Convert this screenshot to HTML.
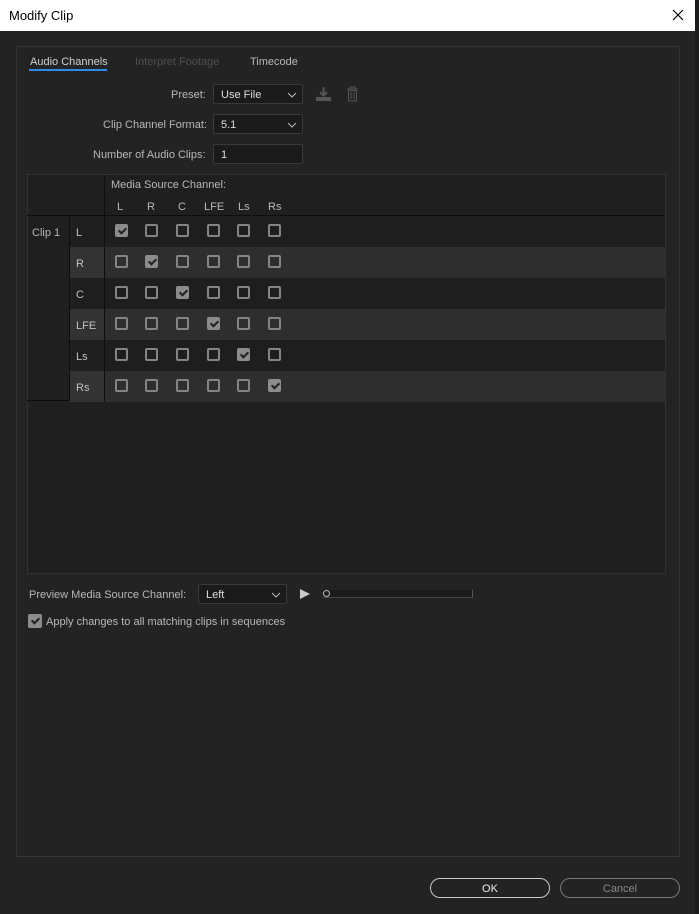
<!DOCTYPE html>
<html><head><style>
*{margin:0;padding:0;box-sizing:border-box}
body{width:699px;height:914px;background:#1a1a1a;font-family:"Liberation Sans",sans-serif;position:relative;overflow:hidden;color:#b8b8b8;font-size:11px;line-height:13px}
.dlg{position:absolute;left:0;top:0;width:695px;height:914px;background:#232323}
.title{position:absolute;left:0;top:0;width:695px;height:31px;background:#fff;color:#000;font-size:13px;line-height:15px;padding:8px 0 0 9px}
.x{position:absolute;left:672px;top:9px}
.panel{position:absolute;left:16px;top:46px;width:664px;height:811px;border:1px solid #343434}
.abs{position:absolute;white-space:nowrap}
.sel{position:absolute;height:20px;background:#1a1a1a;border:1px solid #3a3a3a;border-radius:2px;color:#ddd;padding:4px 0 0 7px}
.sel svg{position:absolute;right:5px;top:7px}
.tbl{position:absolute;left:27px;top:174px;width:639px;height:400px;background:#1f1f1f;border:1px solid #333}
.cb{position:absolute;width:13px;height:13px;border:2px solid #848484;border-radius:2px}
.cb.on{background:#8c8c8c;border-color:#8c8c8c}
.cb.on::after{content:"";position:absolute;left:3px;top:0px;width:3px;height:6px;border:solid #222;border-width:0 2px 2px 0;transform:rotate(45deg)}
.btn{position:absolute;top:878px;width:120px;height:20px;border:1px solid #aaa;border-radius:10px;text-align:center;padding-top:4px;font-size:11px}
</style></head><body>
<div class="dlg">
<div class="title">Modify Clip<svg class="x" width="12" height="12"><path d="M1 1l10 10M11 1L1 11" stroke="#000" stroke-width="1.2"/></svg></div>
<div class="panel"></div>
<div class="abs" style="left:30px;top:56px;color:#d0d0d0">Audio Channels</div>
<div class="abs" style="left:29px;top:69px;width:78px;height:2px;background:#2d8ceb"></div>
<div class="abs" style="left:135px;top:56px;color:#4e4e4e">Interpret Footage</div>
<div class="abs" style="left:250px;top:56px;color:#b8b8b8">Timecode</div>
<div class="abs" style="left:171px;top:89px">Preset:</div>
<div class="sel" style="left:213px;top:84px;width:90px">Use File<svg width="10" height="6"><path d="M1 1l4 4 4-4" stroke="#bbb" fill="none"/></svg></div>
<svg class="abs" style="left:315px;top:86px" width="17" height="16"><path d="M8.5 1v8M5 6l3.5 3.5L12 6" stroke="#555" stroke-width="2" fill="none"/><rect x="1" y="11" width="15" height="4" fill="#555"/></svg>
<svg class="abs" style="left:346px;top:86px" width="13" height="16"><path d="M1 3h11M4 3V1h5v2M2.5 4.5h8V15h-8z M5 6v7M8 6v7" stroke="#555" fill="none"/></svg>
<div class="abs" style="left:103px;top:119px">Clip Channel Format:</div>
<div class="sel" style="left:213px;top:114px;width:90px">5.1<svg width="10" height="6"><path d="M1 1l4 4 4-4" stroke="#bbb" fill="none"/></svg></div>
<div class="abs" style="left:93px;top:149px">Number of Audio Clips:</div>
<div class="sel" style="left:213px;top:144px;width:90px">1</div>
<div class="tbl"></div>
<div class="abs" style="left:104px;top:175px;width:1px;height:225px;background:#0e0e0e"></div>
<div class="abs" style="left:27px;top:215px;width:638px;height:1px;background:#0e0e0e"></div>
<div class="abs" style="left:69px;top:216px;width:1px;height:184px;background:#0e0e0e"></div>
<div class="abs" style="left:27px;top:400px;width:638px;height:1px;background:#0e0e0e"></div>
<div class="abs" style="left:111px;top:179px">Media Source Channel:</div>
<div class="abs" style="left:117px;top:201px">L</div>
<div class="abs" style="left:147px;top:201px">R</div>
<div class="abs" style="left:178px;top:201px">C</div>
<div class="abs" style="left:204px;top:201px">LFE</div>
<div class="abs" style="left:238px;top:201px">Ls</div>
<div class="abs" style="left:268px;top:201px">Rs</div>
<div class="abs" style="left:32px;top:227px">Clip 1</div>
<div id="rows"></div>
<div class="abs" style="left:29px;top:589px">Preview Media Source Channel:</div>
<div class="sel" style="left:198px;top:584px;width:89px">Left<svg width="10" height="6"><path d="M1 1l4 4 4-4" stroke="#bbb" fill="none"/></svg></div>
<svg class="abs" style="left:299px;top:588px" width="12" height="12"><path d="M1 1l10 5-10 5z" fill="#ccc"/></svg>
<div class="abs" style="left:323px;top:590px;width:150px;height:8px;border-bottom:1px solid #444;border-right:1px solid #555;background:#1b1b1b"></div>
<div class="abs" style="left:323px;top:590px;width:7px;height:7px;border:1px solid #bbb;border-radius:50%"></div>
<div class="cb on" style="left:28px;top:614px;width:14px;height:14px"></div>
<div class="abs" style="left:46px;top:616px">Apply changes to all matching clips in sequences</div>
<div class="btn" style="left:430px;color:#eee;border-color:#c8c8c8">OK</div>
<div class="btn" style="left:560px;color:#888;border-color:#777">Cancel</div>
</div>
<script>
var labs=["L","R","C","LFE","Ls","Rs"],xs=[115,145,176,207,237,268],h="";
for(var i=0;i<6;i++){var y=216+i*31,lt=i%2==1;
h+='<div class="abs" style="left:105px;top:'+y+'px;width:560px;height:31px;background:'+(lt?'#2e2e2e':'#1e1e1e')+'"></div>';
h+='<div class="abs" style="left:70px;top:'+y+'px;width:34px;height:31px;background:'+(lt?'#333':'#1e1e1e')+';padding:11px 0 0 6px;color:#c0c0c0">'+labs[i]+'</div>';
for(var j=0;j<6;j++)h+='<div class="cb'+(i==j?' on':'')+'" style="left:'+xs[j]+'px;top:'+(y+8)+'px"></div>';}
document.getElementById("rows").innerHTML=h;
</script>
</body></html>
